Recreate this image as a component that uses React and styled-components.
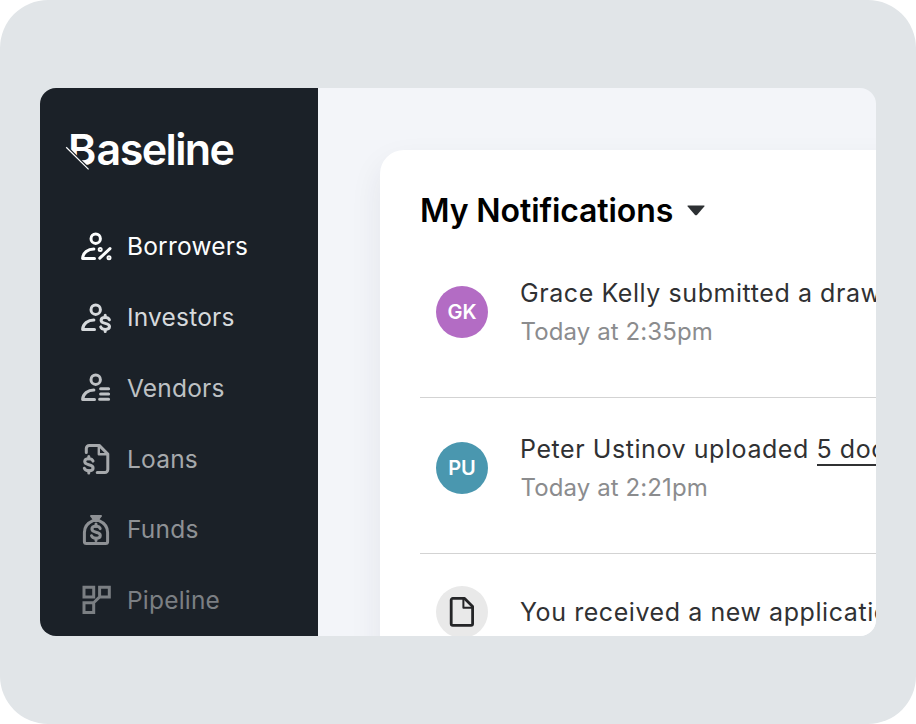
import React from 'react';
import styled, { createGlobalStyle } from 'styled-components';

const navItems = [
  { label: 'Borrowers', color: '#fcfdfd', Icon: BorrowersIcon },
  { label: 'Investors', color: '#d6d9dc', Icon: InvestorsIcon },
  { label: 'Vendors', color: '#bec1c4', Icon: VendorsIcon },
  { label: 'Loans', color: '#a6a9ac', Icon: LoansIcon },
  { label: 'Funds', color: '#8e9195', Icon: FundsIcon },
  { label: 'Pipeline', color: '#7b7f83', Icon: PipelineIcon },
];

export default function App() {
  return (
    <Frame>
      <GlobalStyle />
      <Window>
        <Sidebar>
          <Logo>
            <LogoInitial>B</LogoInitial>aseline
            <LogoSlash viewBox="0 0 30 30">
              <path d="M0 7 L3.5 7 L22 25.3 L22 30 L0 30 Z" fill="#1b2128" />
              <path d="M1.2 7.3 L23.6 29.4" stroke="#fff" strokeWidth="1.2" />
            </LogoSlash>
          </Logo>
          <Nav>
            {navItems.map(({ label, color, Icon }) => (
              <NavItem key={label} $color={color}>
                <Icon />
                <NavLabel>{label}</NavLabel>
              </NavItem>
            ))}
          </Nav>
        </Sidebar>
        <Main>
          <Card>
            <CardHeader>
              <CardTitle>My Notifications</CardTitle>
              <Caret viewBox="0 0 18 11">
                <path d="M1 .5 H17 Q18 .5 17.3 1.5 L10.2 9.7 Q9 11 7.8 9.7 L.7 1.5 Q0 .5 1 .5Z" />
              </Caret>
            </CardHeader>
            <Notification>
              <Avatar $color="#b36cc4">GK</Avatar>
              <Body>
                <Message>Grace Kelly submitted a draw request</Message>
                <Time>Today at 2:35pm</Time>
              </Body>
            </Notification>
            <Notification>
              <Avatar $color="#4a97af">PU</Avatar>
              <Body>
                <Message>
                  Peter Ustinov uploaded <DocLink>5 documents</DocLink>
                </Message>
                <Time>Today at 2:21pm</Time>
              </Body>
            </Notification>
            <Notification $compact>
              <Avatar $color="#e9e9e9">
                <DocumentIcon />
              </Avatar>
              <Body>
                <Message>You received a new application</Message>
              </Body>
            </Notification>
          </Card>
        </Main>
      </Window>
    </Frame>
  );
}

function Person() {
  return (
    <>
      <circle cx="15.7" cy="7.7" r="4.7" />
      <path d="M13.9 18 C8 18 3 21.5 2.6 27.4 H14.5" />
    </>
  );
}

function Dollar({ x, y }) {
  return (
    <g transform={`translate(${x} ${y})`}>
      <path d="M4.2 -3.6 C3.6 -5.3 2 -6 0 -6 C-2.4 -6 -4.1 -4.9 -4.1 -3.1 C-4.1 -1.2 -2.4 -.5 0 0 C2.5 .5 4.3 1.2 4.3 3.2 C4.3 5 2.5 6 0 6 C-2.3 6 -4 5.3 -4.5 3.5" />
      <path d="M0 -8.2 V-6 M0 6 V8.2" />
    </g>
  );
}

function BorrowersIcon() {
  return (
    <NavIcon viewBox="0 0 32 32">
      <Person />
      <path d="M19.8 27.2 L30 17.6" />
      <circle cx="20.2" cy="18.4" r="1" />
      <circle cx="29" cy="26.8" r="1" />
    </NavIcon>
  );
}

function InvestorsIcon() {
  return (
    <NavIcon viewBox="0 0 32 32">
      <Person />
      <Dollar x={25.2} y={21.4} />
    </NavIcon>
  );
}

function VendorsIcon() {
  return (
    <NavIcon viewBox="0 0 32 32">
      <Person />
      <path d="M20.6 16.7 H28.6 M20.6 21.9 H28.6 M19.6 27.2 H28.6" />
    </NavIcon>
  );
}

function LoansIcon() {
  return (
    <NavIcon viewBox="0 0 32 32">
      <path d="M6.3 9.5 V5.4 A3 3 0 0 1 9.3 2.4 H19.2 L27.8 11 V26.6 A3 3 0 0 1 24.8 29.6 H17.2" />
      <path d="M18.8 2.8 V11.2 H27.4" strokeWidth="2.4" />
      <Dollar x={8.8} y={21.7} />
    </NavIcon>
  );
}

function FundsIcon() {
  return (
    <NavIcon viewBox="0 0 32 32">
      <path d="M11 2 H21 L18.6 5 H13.4 Z" fill="currentColor" strokeWidth="2" />
      <path d="M13 6.6 H19 C24.5 9 27.6 13 27.6 18.4 V27.4 A2 2 0 0 1 25.6 29.4 H6.4 A2 2 0 0 1 4.4 27.4 V18.4 C4.4 13 7.5 9 13 6.6Z" />
      <Dollar x={16} y={18.2} />
    </NavIcon>
  );
}

function PipelineIcon() {
  return (
    <NavIcon viewBox="0 0 32 32" strokeLinejoin="miter">
      <path d="M4 3.3 H13.7 V13 H4Z M19.6 3.3 H29.3 V13 H19.6Z M4 18.7 H13.7 V28.4 H4Z M13.9 18.5 L19.4 13.2" />
    </NavIcon>
  );
}

function DocumentIcon() {
  return (
    <DocIcon viewBox="0 0 26 32">
      <path d="M3.8 2.4 H15.6 L23.6 10.4 V27.8 A1.6 1.6 0 0 1 22 29.4 H3.8 A1.6 1.6 0 0 1 2.2 27.8 V4 A1.6 1.6 0 0 1 3.8 2.4Z" />
      <path d="M14.4 2.4 V11.8 H23.6" strokeWidth="2" />
    </DocIcon>
  );
}

const GlobalStyle = createGlobalStyle`
  * {
    box-sizing: border-box;
  }
  body {
    margin: 0;
    background: #fff;
    font-family: 'Inter', sans-serif;
  }
`;

const Frame = styled.div`
  width: 916px;
  height: 724px;
  padding: 88px 40px;
  border-radius: 48px;
  background: #e1e5e8;
`;

const Window = styled.div`
  display: flex;
  height: 548px;
  border-radius: 16px;
  overflow: hidden;
  background: #f3f5f9;
`;

const Sidebar = styled.div`
  flex: none;
  width: 278px;
  padding-top: 35px;
  background: #1b2128;
`;

const Logo = styled.div`
  position: relative;
  height: 53px;
  padding-left: 28px;
  line-height: 53px;
  font-size: 43px;
  font-weight: 600;
  letter-spacing: -1.6px;
  color: #fff;
`;

const LogoInitial = styled.span`
  letter-spacing: 0.2px;
`;

const LogoSlash = styled.svg`
  position: absolute;
  left: 25px;
  top: 17px;
  width: 30px;
  height: 30px;
`;

const Nav = styled.div`
  display: flex;
  flex-direction: column;
  padding: 35.6px 0 0 40px;
`;

const NavItem = styled.div`
  display: flex;
  align-items: center;
  gap: 15px;
  height: 70.7px;
  color: ${(props) => props.$color};
`;

const NavIcon = styled.svg`
  flex: none;
  width: 32px;
  height: 32px;
  fill: none;
  stroke: currentColor;
  stroke-width: 3;
  stroke-linecap: round;
  stroke-linejoin: ${(props) => props.strokeLinejoin || 'round'};
`;

const NavLabel = styled.span`
  padding-bottom: 1px;
  font-size: 24.5px;
  letter-spacing: 0.2px;
`;

const Main = styled.div`
  flex: 1;
  min-width: 0;
  padding: 62px 0 0 62px;
`;

const Card = styled.div`
  width: 560px;
  height: 560px;
  padding: 40px 0 0 40px;
  border-radius: 24px;
  background: #fff;
  box-shadow: 0 14px 32px rgba(35, 40, 70, 0.08);
`;

const CardHeader = styled.div`
  display: flex;
  align-items: center;
  gap: 14px;
  height: 41px;
  margin-bottom: 11px;
`;

const CardTitle = styled.div`
  font-size: 32px;
  font-weight: 600;
  letter-spacing: -0.1px;
  color: #000;
  white-space: nowrap;
`;

const Caret = styled.svg`
  width: 18px;
  height: 11px;
  fill: #2d3033;
`;

const Notification = styled.div`
  display: flex;
  align-items: center;
  gap: 32px;
  height: ${(props) => (props.$compact ? '117px' : '156px')};
  padding: 0 0 ${(props) => (props.$compact ? '0' : '15px')} 16px;
  border-bottom: 1px solid #d3d3d3;
`;

const Avatar = styled.div`
  display: flex;
  flex: none;
  align-items: center;
  justify-content: center;
  width: 52px;
  height: 52px;
  border-radius: 50%;
  background: ${(props) => props.$color};
  color: #fff;
  font-size: 20px;
  font-weight: 600;
`;

const DocIcon = styled.svg`
  width: 26px;
  height: 32px;
  fill: none;
  stroke: #242527;
  stroke-width: 2.8;
  stroke-linejoin: round;
`;

const Body = styled.div`
  white-space: nowrap;
`;

const Message = styled.div`
  line-height: 38px;
  font-size: 25px;
  letter-spacing: 0.57px;
  color: #303133;
`;

const DocLink = styled.span`
  border-bottom: 2px solid #303133;
`;

const Time = styled.div`
  padding-left: 0.5px;
  line-height: 40px;
  margin-bottom: -2px;
  font-size: 24px;
  letter-spacing: 0.1px;
  color: #8b8c8e;
`;
